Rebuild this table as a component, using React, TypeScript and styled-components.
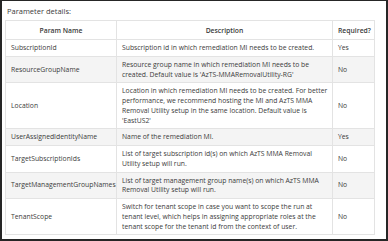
import React from "react";
import styled, { createGlobalStyle } from "styled-components";

const GlobalStyle = createGlobalStyle`
  html, body {
    margin: 0;
    padding: 0;
    background: #ffffff;
  }
`;

type Param = {
  name: string;
  lines: string[];
  required: "Yes" | "No";
};

const params: Param[] = [
  {
    name: "SubscriptionId",
    lines: ["Subscription id in which remediation MI needs to be created."],
    required: "Yes",
  },
  {
    name: "ResourceGroupName",
    lines: [
      "Resource group name in which remediation MI needs to be",
      "created. Default value is 'AzTS-MMARemovalUtility-RG'",
    ],
    required: "No",
  },
  {
    name: "Location",
    lines: [
      "Location in which remediation MI needs to be created. For better",
      "performance, we recommend hosting the MI and AzTS MMA",
      "Removal Utility setup in the same location. Default value is",
      "'EastUS2'",
    ],
    required: "No",
  },
  {
    name: "UserAssignedIdentityName",
    lines: ["Name of the remediation MI."],
    required: "Yes",
  },
  {
    name: "TargetSubscriptionIds",
    lines: [
      "List of target subscription id(s) on which AzTS MMA Removal",
      "Utility setup will run.",
    ],
    required: "No",
  },
  {
    name: "TargetManagementGroupNames",
    lines: [
      "List of target management group name(s) on which AzTS MMA",
      "Removal Utility setup will run.",
    ],
    required: "No",
  },
  {
    name: "TenantScope",
    lines: [
      "Switch for tenant scope in case you want to scope the run at",
      "tenant level, which helps in assigning appropriate roles at the",
      "tenant scope for the tenant id from the context of user.",
    ],
    required: "No",
  },
];

export default function App() {
  return (
    <>
      <GlobalStyle />
      <Frame>
        <Title>Parameter details:</Title>
        <Table>
          <colgroup>
            <col style={{ width: 111 }} />
            <col style={{ width: 216 }} />
            <col style={{ width: 42 }} />
          </colgroup>
          <thead>
            <tr>
              <HeadCell>Param Name</HeadCell>
              <HeadCell>Description</HeadCell>
              <HeadCell>Required?</HeadCell>
            </tr>
          </thead>
          <tbody>
            {params.map((p, i) => (
              <Row key={p.name} $shaded={i % 2 === 1}>
                <Cell>{p.name}</Cell>
                <Cell>
                  {p.lines.map((l) => (
                    <Line key={l}>{l}</Line>
                  ))}
                </Cell>
                <Cell>{p.required}</Cell>
              </Row>
            ))}
          </tbody>
        </Table>
      </Frame>
    </>
  );
}

const Frame = styled.div`
  width: 388px;
  height: 241px;
  box-sizing: border-box;
  border: 2px solid #262626;
  border-top-width: 1px;
  background: #ffffff;
  padding: 4px 0 0 3px;
  font-family: "Open Sans", "Noto Sans", sans-serif;
  color: #3b3b3b;
  overflow: hidden;
`;

const Title = styled.div`
  font-size: 7.5px;
  line-height: 12px;
  padding-left: 2px;
  margin-bottom: 3px;
`;

const Table = styled.table`
  border-collapse: collapse;
  table-layout: fixed;
  width: 369px;
  font-size: 6.8px;
`;

const HeadCell = styled.th`
  border: 1px solid #e3e3e3;
  font-weight: 600;
  text-align: center;
  padding: 4.5px 5px;
  line-height: 9px;
`;

const Row = styled.tr<{ $shaded: boolean }>`
  background: ${(p) => (p.$shaded ? "#f4f4f4" : "#ffffff")};
`;

const Cell = styled.td`
  border: 1px solid #e3e3e3;
  padding: 3px 5px;
  line-height: 9.75px;
  vertical-align: middle;
  white-space: nowrap;
`;

const Line = styled.div``;
